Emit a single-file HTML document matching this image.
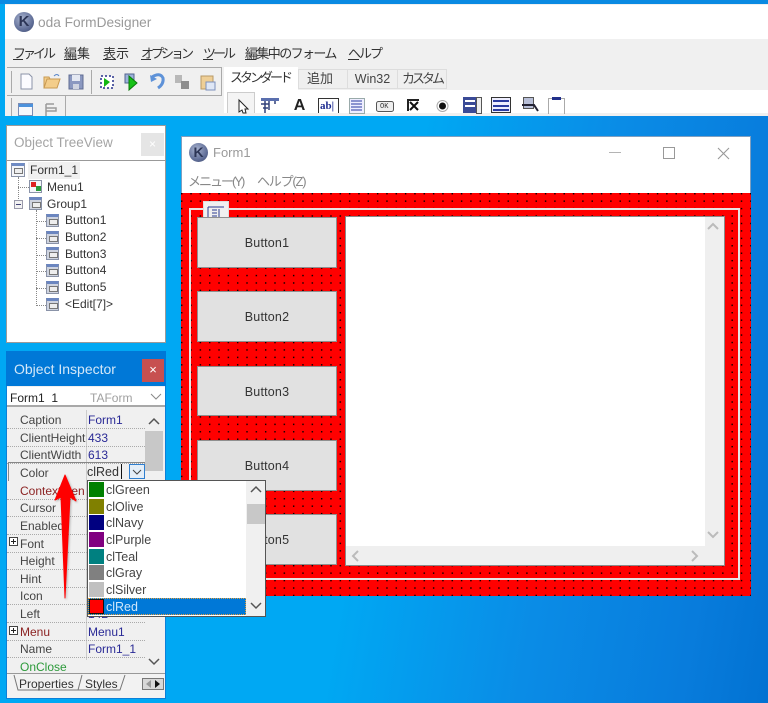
<!DOCTYPE html>
<html><head><meta charset="utf-8">
<style>
html,body{margin:0;padding:0}
body{width:768px;height:703px;overflow:hidden;position:relative;background:#00a8f3;font-family:"Liberation Sans","Noto Sans CJK JP",sans-serif;font-size:12px;color:#222}
div,span{position:absolute;white-space:nowrap;box-sizing:border-box}
svg{position:absolute;overflow:visible}
#w{left:0;top:0;width:768px;height:703px;overflow:hidden;filter:blur(.35px);background:linear-gradient(100deg,#00a8f3 0,#00a8f3 50%,#0a8ce6 72%,#087cdc 90%,#0272d2 100%)}
.logo{width:20px;height:20px;border-radius:50%;background:radial-gradient(circle at 40% 35%,#a9b4d0,#5c6a94 65%,#3b4668);color:#2c3556;font-weight:bold;font-size:15px;line-height:20px;text-align:center}
.ttl{color:#9a9a9a;font-size:13.7px;line-height:18px}
.menu{font-size:13px;color:#333;top:45px;line-height:18px}
.menu u{text-decoration-thickness:1px;text-underline-offset:1px}
.tab{top:69px;height:20px;background:#efefef;border:1px solid #ddd;font-size:13px;line-height:18px;text-align:center;color:#444}
.tree{font-size:12px;color:#333;line-height:16px}
.ico{width:13px;height:13px;background:#cfd4e0;border:1px solid #8a93a8;border-top:3px solid #6b86c0}
.ico::after{content:"";position:absolute;left:2px;top:2px;width:7px;height:4px;border:1px solid #777;background:#eee}
.dl{background:none;border-left:1px dotted #888}
.dh{border-top:1px dotted #888}
.row{left:7px;width:138px;height:18px;border-bottom:1px dotted #aaa}
.k{left:13px;font-size:12px;line-height:17px;color:#444}
.v{left:81px;font-size:12px;line-height:17px;color:#2a2a96}
.sw{left:89px;width:15px;height:15px}
.it{left:106px;font-size:12.5px;line-height:16px;color:#444}
.btn{left:197px;width:140px;background:#e1e1e1;border:1px solid #8f8f8f;text-align:center;font-size:12.5px;color:#333;letter-spacing:.2px}
</style></head>
<body>
<div id="w">
<div style="left:0;top:0;width:768px;height:4px;background:#0a8ae2"></div>

<!-- main window -->
<div style="left:5px;top:4px;width:763px;height:112px;background:#f0f0f0"></div>
<div style="left:5px;top:5px;width:763px;height:34px;background:#fff"></div>
<div class="logo" style="left:14px;top:12px">K</div>
<div class="ttl" style="left:38px;top:14px">oda FormDesigner</div>
<div class="menu" style="left:13px;letter-spacing:-3px"><u>フ</u>ァイル</div>
<div class="menu" style="left:64px"><u>編</u>集</div>
<div class="menu" style="left:103px"><u>表</u>示</div>
<div class="menu" style="left:141px;letter-spacing:-3px"><u>オ</u>プション</div>
<div class="menu" style="left:203px;letter-spacing:-3px"><u>ツ</u>ール</div>
<div class="menu" style="left:245px;letter-spacing:-1.6px"><u>編</u>集中のフォーム</div>
<div class="menu" style="left:348px;letter-spacing:-2px"><u>ヘ</u>ルプ</div>

<!-- toolbar -->
<div style="left:7px;top:67px;width:215px;height:29px;border:1px solid #aaa;border-left:none"></div>
<div style="left:11px;top:71px;width:1px;height:22px;background:#aaa"></div>
<div style="left:91px;top:70px;width:1px;height:24px;background:#aaa"></div>
<div style="left:11px;top:98px;width:1px;height:18px;background:#aaa"></div>
<div style="left:65px;top:96px;width:1px;height:20px;background:#aaa"></div>
<svg style="left:0;top:60px" width="230" height="60">
<path d="M21 14h8l3 3v12H21z" fill="#fbfbff" stroke="#8b93a8"/>
<path d="M44 28l3-9h13l-3 9zM44 28V17h5l1 2h6" fill="#f3cd8a" stroke="#c89a52"/><path d="M54 16q3-3 5 0" fill="none" stroke="#5a86c8"/>
<rect x="69" y="15" width="14" height="14" fill="#8b98c0" stroke="#5f6c92"/><rect x="72" y="15" width="8" height="6" fill="#e4e8f2"/><rect x="73" y="24" width="6" height="5" fill="#d0d4e0"/>
<rect x="101" y="16" width="12" height="12" fill="#fff" stroke="#26308a" stroke-width="1.5" stroke-dasharray="2 2"/><path d="M104 18l6 4-6 5z" fill="#12b812"/>
<rect x="125" y="14" width="9" height="9" fill="#9cb2dc" stroke="#54648e"/><path d="M129 16l8 7-8 7z" fill="#17c217" stroke="#0b7a0b"/>
<path d="M152 17q8-5 11 1 1 6-5 10" fill="none" stroke="#5e92d8" stroke-width="3"/><path d="M150 15l1 7 6-3z" fill="#5e92d8"/>
<rect x="175" y="15" width="7" height="8" fill="#b8b8b8"/><rect x="181" y="21" width="8" height="8" fill="#8e8e8e"/>
<rect x="201" y="16" width="12" height="13" fill="#efcf96" stroke="#b99a66"/><rect x="206" y="22" width="9" height="8" fill="#dfe7f6" stroke="#7c90bc"/>
<rect x="18.500" y="43.500" width="14" height="12" fill="#f6f8fc" stroke="#7b8cb4"/><rect x="19" y="44" width="14" height="3" fill="#4d92dc"/>
<path d="M46 44h8M46 44v12M46 48h10v3h-10" fill="none" stroke="#9a9a9a" stroke-width="1.5"/>
</svg>

<!-- palette tabs -->
<div class="tab" style="left:298px;width:50px;padding-right:6px">追加</div>
<div class="tab" style="left:347px;width:51px;font-size:12.500px">Win32</div>
<div class="tab" style="left:397px;width:50px;letter-spacing:-3px">カスタム</div>
<div style="left:224px;top:67px;width:74px;height:23px;background:#fff;font-size:13px;line-height:21px;padding-left:6px;letter-spacing:-3px;color:#333">スタンダード</div>
<div style="left:224px;top:90px;width:544px;height:23px;background:#fff"></div>
<div style="left:227px;top:92px;width:28px;height:21px;background:#f4f4f4;border:1px solid #ccc;border-bottom:none"></div>
<svg style="left:225px;top:90px" width="345" height="23" viewBox="0 0 345 23">
<path d="M14 10v12l3-2 1 3h3l-1-4h3z" fill="#fff" stroke="#222"/>
<path d="M40 11v12M44 11v9M36 14h8M38 18h5M50 11v3" fill="none" stroke="#30407a" stroke-width="1.5"/>
<rect x="36" y="8" width="18" height="3" fill="#5a6fae"/>
<path d="M93.500 23V8.500h20V23" fill="#fff" stroke="#333"/>
<rect x="124.500" y="8.500" width="15" height="15" fill="#eef" stroke="#9aa"/><path d="M126 11h11M126 14h11M126 17h11M126 20h11" stroke="#2a3aa0"/>
<rect x="151.500" y="11.500" width="17" height="10" rx="2" fill="#eee" stroke="#555"/>
<path d="M183 21V10h11" fill="none" stroke="#222" stroke-width="2"/><path d="M185 12l8 8M193 12l-8 8" stroke="#111" stroke-width="2"/>
<circle cx="217.500" cy="16" r="5.500" fill="#fff" stroke="#aaa"/><circle cx="217.500" cy="16" r="3.500" fill="#111"/>
<rect x="238" y="7" width="13" height="16" fill="#3a4a96"/><rect x="240" y="10" width="10" height="2" fill="#fff"/><rect x="240" y="15" width="10" height="2" fill="#fff"/><rect x="251.500" y="7.500" width="5" height="16" fill="#eee" stroke="#555"/>
<rect x="266.500" y="7.500" width="19" height="15" fill="#eef" stroke="#333"/><path d="M268 11h16M268 16h16M268 20h16" stroke="#2a3aa0" stroke-width="2"/>
<rect x="298.500" y="7.500" width="10" height="11" fill="#b8bfd8" stroke="#555"/><path d="M297 15h12l4 6" fill="none" stroke="#223" stroke-width="2"/>
<path d="M323.500 24V8.500h16V24" fill="none" stroke="#aaa"/><rect x="327" y="7" width="9" height="3" fill="#22308a"/>
</svg>
<div style="left:292px;top:97px;width:15px;font-weight:bold;font-size:16px;line-height:18px;color:#222;text-align:center">A</div>
<div style="left:320px;top:100px;font-family:'Liberation Serif',serif;font-weight:bold;font-size:11px;line-height:13px;color:#1c2a90">ab|</div>
<div style="left:380px;top:103px;font-family:'Liberation Mono',monospace;font-size:7px;line-height:8px;color:#333">OK</div>

<!-- tree window -->
<div style="left:6px;top:125px;width:160px;height:218px;background:#fff;border:1px solid #9a9a9a"></div>
<div style="left:7px;top:160px;width:158px;height:1px;background:#999"></div>
<div class="ttl" style="left:14px;top:134px;font-size:13.500px;color:#a4a4a4">Object TreeView</div>
<div style="left:141px;top:133px;width:23px;height:23px;background:#e5e5e5;color:#fff;text-align:center;line-height:22px;font-size:12px">×</div>
<div style="left:28px;top:162px;width:52px;height:17px;background:#f0f0f0"></div>
<div class="ico" style="left:11px;top:163px;width:14px;height:14px;background:#f4f6fa;border-top-color:#6f8bc4"></div>
<div class="tree" style="left:30px;top:162px">Form1_1</div>
<div class="dl" style="left:18px;top:177px;height:28px"></div><div class="dh" style="left:18px;top:187px;width:11px"></div>
<div style="left:29px;top:180px;width:13px;height:13px;background:#f4f6fa;border:1px solid #8a93a8"></div>
<div style="left:31px;top:182px;width:5px;height:5px;background:#d22"></div><div style="left:36px;top:186px;width:5px;height:5px;background:#2a9a3c"></div>
<div class="tree" style="left:47px;top:179px">Menu1</div>
<div style="left:14px;top:200px;width:9px;height:9px;background:#f2f2f2;border:1px solid #99a"></div><div style="left:16px;top:204px;width:5px;height:1px;background:#447"></div>
<div class="ico" style="left:29px;top:197px"></div>
<div class="tree" style="left:47px;top:196px">Group1</div>
<div class="dl" style="left:36px;top:210px;height:96px"></div>
<div class="dh" style="left:36px;top:221px;width:10px"></div><div class="dh" style="left:36px;top:238px;width:10px"></div><div class="dh" style="left:36px;top:255px;width:10px"></div><div class="dh" style="left:36px;top:271px;width:10px"></div><div class="dh" style="left:36px;top:288px;width:10px"></div><div class="dh" style="left:36px;top:305px;width:10px"></div>
<div class="ico" style="left:46px;top:214px"></div><div class="tree" style="left:65px;top:212px">Button1</div>
<div class="ico" style="left:46px;top:231px"></div><div class="tree" style="left:65px;top:229px">Button2</div>
<div class="ico" style="left:46px;top:247px"></div><div class="tree" style="left:65px;top:246px">Button3</div>
<div class="ico" style="left:46px;top:264px"></div><div class="tree" style="left:65px;top:262px">Button4</div>
<div class="ico" style="left:46px;top:281px"></div><div class="tree" style="left:65px;top:279px">Button5</div>
<div class="ico" style="left:46px;top:298px"></div><div class="tree" style="left:65px;top:296px">&lt;Edit[7]&gt;</div>

<!-- inspector -->
<div style="left:6px;top:351px;width:160px;height:348px;background:#f0f0f0;border:1px solid #0c80d8"></div>
<div style="left:6px;top:351px;width:160px;height:35px;background:#0078d7"></div>
<div style="left:14px;top:360px;font-size:14px;line-height:18px;color:#d4e8f8">Object Inspector</div>
<div style="left:142px;top:359px;width:22px;height:23px;background:#c75050;color:#fff;text-align:center;line-height:22px;font-size:13px">×</div>
<div style="left:7px;top:387px;width:158px;height:20px;background:#fff;border-bottom:2px solid #a8a8a8"></div>
<div style="left:10px;top:391px;font-size:12px;line-height:15px;color:#222">Form1&nbsp;&nbsp;1</div>
<div style="left:90px;top:391px;font-size:12px;line-height:15px;color:#a0a0a0">TAForm</div>
<svg style="left:150px;top:393px" width="12" height="8"><path d="M1 1l5 5 5-5" fill="none" stroke="#888"/></svg>

<div style="left:86px;top:410px;width:1px;height:250px;background:#ccc"></div>
<div class="row" style="top:411px"></div><div class="k" style="left:20px;top:412px">Caption</div><div class="v" style="left:88px;top:412px">Form1</div>
<div class="row" style="top:429px"></div><div class="k" style="left:20px;top:430px">ClientHeight</div><div class="v" style="left:88px;top:430px">433</div>
<div class="row" style="top:446px"></div><div class="k" style="left:20px;top:447px">ClientWidth</div><div class="v" style="left:88px;top:447px">613</div>
<div style="left:8px;top:462px;width:137px;height:19px;border:1px solid #888;border-right:none;border-bottom:none"></div><div class="k" style="left:20px;top:465px">Color</div>
<div style="left:87px;top:465px;font-size:12.500px;line-height:15px;color:#333">clRed</div><div style="left:121px;top:464px;width:1px;height:15px;background:#111"></div>
<div style="left:129px;top:464px;width:16px;height:15px;background:#e4eef8;border:1px solid #2f7fd0"></div>
<svg style="left:132px;top:469px" width="10" height="6"><path d="M1 1l4 4 4-4" fill="none" stroke="#444"/></svg>
<div class="row" style="top:482px"></div><div class="k" style="left:20px;top:483px;color:#8c2323">ContextMen</div>
<div class="row" style="top:499px"></div><div class="k" style="left:20px;top:500px">Cursor</div>
<div class="row" style="top:517px"></div><div class="k" style="left:20px;top:518px">Enabled</div>
<div class="row" style="top:535px"></div><div class="k" style="left:20px;top:536px">Font</div>
<div class="row" style="top:552px"></div><div class="k" style="left:20px;top:553px">Height</div>
<div class="row" style="top:570px"></div><div class="k" style="left:20px;top:571px">Hint</div>
<div class="row" style="top:587px"></div><div class="k" style="left:20px;top:588px">Icon</div>
<div class="row" style="top:605px"></div><div class="k" style="left:20px;top:606px">Left</div><div class="v" style="left:88px;top:606px">142</div>
<div class="row" style="top:623px"></div><div class="k" style="left:20px;top:624px;color:#8c2323">Menu</div><div class="v" style="left:88px;top:624px">Menu1</div>
<div class="row" style="top:640px"></div><div class="k" style="left:20px;top:641px">Name</div><div class="v" style="left:88px;top:641px">Form1_1</div>
<div class="k" style="left:20px;top:659px;color:#2c9a3a">OnClose</div>
<div style="left:9px;top:537px;width:9px;height:9px;border:1px solid #444;background:#fff"></div><div style="left:11px;top:541px;width:5px;height:1px;background:#222"></div><div style="left:13px;top:539px;width:1px;height:5px;background:#222"></div>
<div style="left:9px;top:626px;width:9px;height:9px;border:1px solid #444;background:#fff"></div><div style="left:11px;top:630px;width:5px;height:1px;background:#222"></div><div style="left:13px;top:628px;width:1px;height:5px;background:#222"></div>
<div style="left:145px;top:411px;width:18px;height:262px;background:#f0f0f0"></div>
<div style="left:145px;top:431px;width:18px;height:40px;background:#c8c8c8"></div>
<svg style="left:148px;top:418px" width="12" height="8"><path d="M1 6l5-5 5 5" fill="none" stroke="#555" stroke-width="1.500"/></svg>
<svg style="left:148px;top:658px" width="12" height="8"><path d="M1 1l5 5 5-5" fill="none" stroke="#555" stroke-width="1.500"/></svg>
<!-- tabs -->
<div style="left:7px;top:673px;width:158px;height:25px;background:#f2f2f2;border-top:1px solid #999"></div>
<svg style="left:7px;top:673px" width="125" height="22"><path d="M7 2l4 15h60l4-15M71 17h42l5-15" fill="none" stroke="#777"/></svg>
<div style="left:19px;top:677px;font-size:12px;line-height:15px;color:#333">Properties</div>
<div style="left:85px;top:677px;font-size:12px;line-height:15px;color:#333">Styles</div>
<div style="left:142px;top:678px;width:22px;height:12px;background:#d8d8d8;border:1px solid #777"></div>
<svg style="left:143px;top:679px" width="20" height="10"><path d="M8 1L3 5l5 4z" fill="#999"/><path d="M12 1l5 4-5 4z" fill="#111"/></svg>

<!-- form -->
<div style="left:181px;top:136px;width:570px;height:57px;background:#fff;border:1px solid #7f9fc0;border-bottom:none"></div>
<div class="logo" style="left:189px;top:143px;width:19px;height:19px;font-size:14px;line-height:19px">K</div>
<div class="ttl" style="left:213px;top:144px;font-size:13px">Form1</div>
<div style="left:609px;top:152px;width:12px;height:1px;background:#b4b4b4"></div>
<div style="left:663px;top:147px;width:12px;height:12px;border:1px solid #999"></div>
<svg style="left:717px;top:147px" width="13" height="13"><path d="M1 1l11 11M12 1L1 12" stroke="#999" stroke-width="1.100"/></svg>
<div style="left:188px;top:174px;font-size:13px;line-height:16px;color:#888;letter-spacing:-2px">メニュー(Y)</div>
<div style="left:257px;top:174px;font-size:13px;line-height:16px;color:#888;letter-spacing:-1.200px">ヘルプ(Z)</div>
<div style="left:181px;top:193px;width:570px;height:403px;background:#f00"></div>
<svg style="left:181px;top:193px" width="570" height="403" viewBox="0 0 570 403"><defs><pattern id="g" width="9.330" height="7.440" patternUnits="userSpaceOnUse"><rect width="1.400" height="1.400" fill="#000"/></pattern></defs><rect width="570" height="403" fill="url(#g)"/></svg>
<div style="left:189px;top:208px;width:551px;height:372px;border:2px solid #e8e4e4"></div>
<div style="left:203px;top:201px;width:26px;height:20px;background:#f0f0f0;border:1px solid #ddd"></div>
<svg style="left:206px;top:205px" width="20" height="14"><path d="M2 2h16M2 2v10M6 5h5M6 8h5M6 11h5M13 4v9" stroke="#2a3a90" fill="none"/></svg>
<div class="btn" style="top:217px;height:51px;line-height:51px">Button1</div>
<div class="btn" style="top:291px;height:51px;line-height:51px">Button2</div>
<div class="btn" style="top:366px;height:50px;line-height:50px">Button3</div>
<div class="btn" style="top:440px;height:51px;line-height:51px">Button4</div>
<div class="btn" style="top:514px;height:51px;line-height:51px">Button5</div>
<div style="left:345px;top:216px;width:380px;height:350px;background:#fff;border:1px solid #8a8a8a"></div>
<div style="left:705px;top:217px;width:19px;height:348px;background:#efefef"></div>
<div style="left:346px;top:546px;width:378px;height:19px;background:#efefef"></div>
<svg style="left:707px;top:223px" width="12" height="8"><path d="M1 6l5-5 5 5" fill="none" stroke="#bbb" stroke-width="2"/></svg>
<svg style="left:707px;top:531px" width="12" height="8"><path d="M1 1l5 5 5-5" fill="none" stroke="#bbb" stroke-width="2"/></svg>
<svg style="left:352px;top:550px" width="8" height="12"><path d="M6 1L1 6l5 5" fill="none" stroke="#bbb" stroke-width="2"/></svg>
<svg style="left:691px;top:550px" width="8" height="12"><path d="M1 1l5 5-5 5" fill="none" stroke="#bbb" stroke-width="2"/></svg>

<!-- dropdown -->
<div style="left:87px;top:480px;width:179px;height:137px;background:#fff;border:1px solid #555"></div>
<div style="left:246px;top:481px;width:19px;height:135px;background:#f0f0f0"></div>
<div style="left:247px;top:504px;width:18px;height:20px;background:#c8c8c8"></div>
<svg style="left:250px;top:486px" width="12" height="8"><path d="M1 6l5-5 5 5" fill="none" stroke="#555" stroke-width="1.500"/></svg>
<svg style="left:250px;top:602px" width="12" height="8"><path d="M1 1l5 5 5-5" fill="none" stroke="#555" stroke-width="1.500"/></svg>
<div class="sw" style="top:482px;background:#008000"></div><div class="it" style="top:482px">clGreen</div>
<div class="sw" style="top:499px;background:#808000"></div><div class="it" style="top:499px">clOlive</div>
<div class="sw" style="top:515px;background:#000080"></div><div class="it" style="top:515px">clNavy</div>
<div class="sw" style="top:532px;background:#800080"></div><div class="it" style="top:532px">clPurple</div>
<div class="sw" style="top:549px;background:#008080"></div><div class="it" style="top:549px">clTeal</div>
<div class="sw" style="top:565px;background:#808080"></div><div class="it" style="top:565px">clGray</div>
<div class="sw" style="top:582px;background:#c0c0c0"></div><div class="it" style="top:582px">clSilver</div>
<div style="left:88px;top:598px;width:158px;height:17px;background:#0078d7;border:1px dotted #e0a040"></div>
<div class="sw" style="top:599px;background:#f00;border:1px solid #111"></div><div class="it" style="top:599px;color:#cfe6fa">clRed</div>

<!-- arrow -->
<svg style="left:0;top:0;filter:drop-shadow(1px 1px 1px rgba(0,0,0,.25))" width="768" height="703"><path d="M65 475L55 500l6-3 4 101 5-101 6 4z" fill="#f00" stroke="#f00" stroke-linejoin="round"/></svg>
</div>
</body></html>
